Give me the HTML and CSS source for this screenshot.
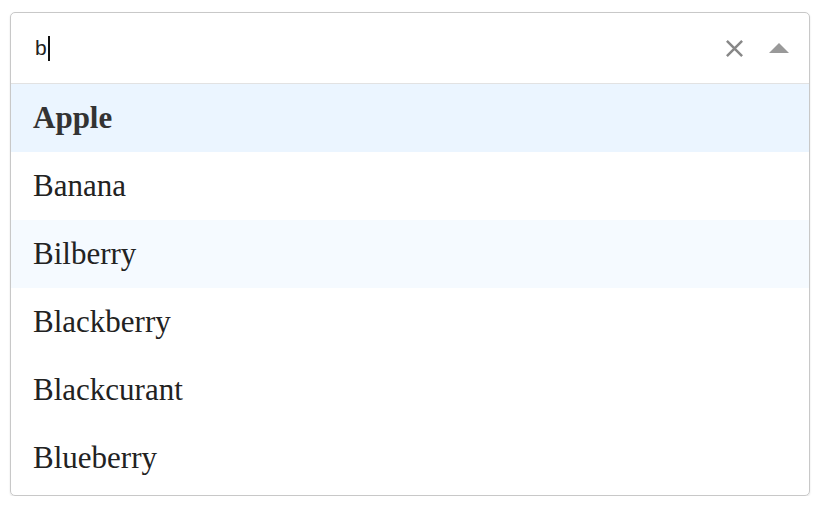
FILE: index.html
```html
<!DOCTYPE html>
<html lang="en">
<head>
    <meta charset="UTF-8">
    <title>Select</title>
    <link rel="stylesheet" href="styles.css">
</head>
<body>
    <div class="select">
        <div class="control">
            <div class="value">b<span class="caret"></span></div>
            <span class="clear">
                <svg width="20" height="20" viewBox="0 0 20 20"><path d="M2 2 L18 18 M18 2 L2 18" stroke="#888" stroke-width="2.6" fill="none"/></svg>
            </span>
            <span class="arrow">
                <svg width="20" height="10" viewBox="0 0 20 10"><path d="M0 10 L10 0 L20 10 Z" fill="#999"/></svg>
            </span>
        </div>
        <div class="menu">
            <div class="option selected">Apple</div>
            <div class="option">Banana</div>
            <div class="option focused">Bilberry</div>
            <div class="option">Blackberry</div>
            <div class="option">Blackcurant</div>
            <div class="option">Blueberry</div>
        </div>
    </div>
</body>
</html>
```

FILE: styles.css
```css
body {
    margin: 0;
    background: white;
    font-family: 'Liberation Serif', serif;
}
.select {
    margin: 12px 10px 0;
    border: 1px solid #c8c8c8;
    border-radius: 5px;
    box-shadow: 0 1px 2px rgba(0,0,0,0.12);
    overflow: hidden;
}
.control {
    display: flex;
    align-items: center;
    height: 70px;
    border-bottom: 1px solid #e2e2e2;
    padding: 0 20px 0 24px;
}
.value {
    flex: 1;
    font-family: 'Liberation Sans', sans-serif;
    font-size: 21px;
    color: #222;
    display: flex;
    align-items: center;
}
.caret {
    display: inline-block;
    width: 2px;
    height: 25px;
    margin-left: 1px;
    background: #111;
}
.clear {
    display: flex;
    margin-right: 25px;
}
.clear svg {
    width: 19px;
    height: 19px;
}
.arrow {
    display: flex;
    margin-top: -1px;
}
.menu {
    padding-bottom: 3px;
}
.option {
    height: 68px;
    display: flex;
    align-items: center;
    padding-left: 22px;
    font-size: 31px;
    color: #222;
}
.option.selected {
    background: #ebf5ff;
    font-weight: bold;
    color: #333;
}
.option.focused {
    background: #f5faff;
}
```
